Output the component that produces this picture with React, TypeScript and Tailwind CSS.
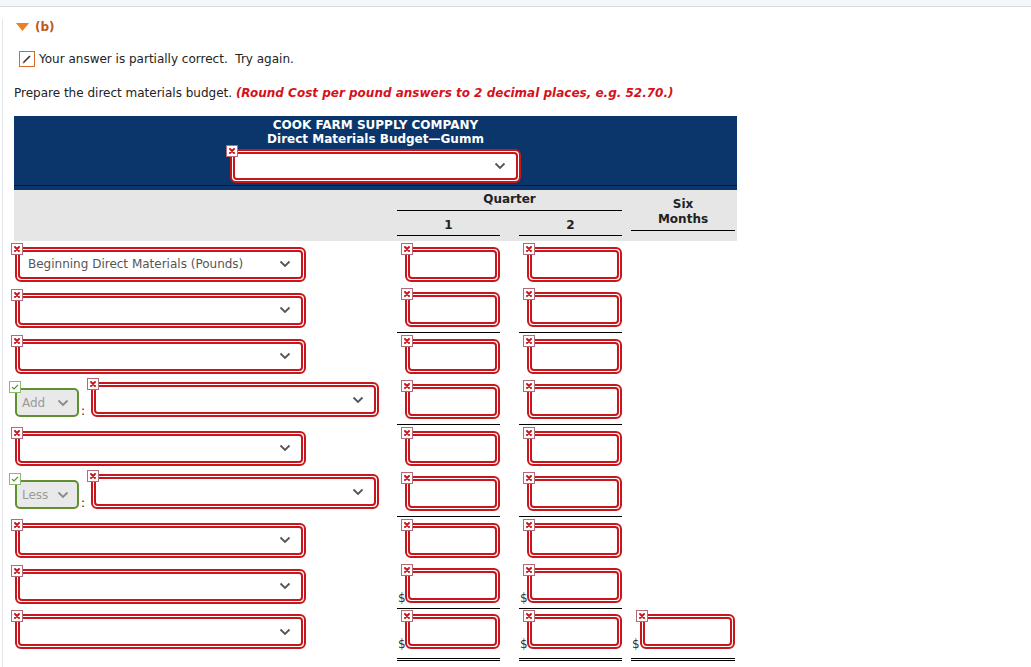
import React from "react";

const RED = "#c8161d";

function XBadge({ className = "" }: { className?: string }) {
  return (
    <svg width="12" height="12" viewBox="0 0 12 12" className={className}>
      <rect x="0.5" y="0.5" width="11" height="11" fill="#fff" stroke="#b66a76" />
      <path d="M4 4 L8 8 M8 4 L4 8" stroke={RED} strokeWidth="2" strokeLinecap="round" />
    </svg>
  );
}

function CheckBadge({ className = "" }: { className?: string }) {
  return (
    <svg width="12" height="12" viewBox="0 0 12 12" className={className}>
      <rect x="0.5" y="0.5" width="11" height="11" fill="#fff" stroke="#8fb870" />
      <path d="M3 6.2 L5 8 L9 3.8" stroke="#4d8a2a" strokeWidth="1.1" fill="none" />
    </svg>
  );
}

function Chevron({ color = "#555" }: { color?: string }) {
  return (
    <svg width="12" height="8" viewBox="0 0 12 8">
      <path d="M1.5 1.5 L6 6 L10.5 1.5" stroke={color} strokeWidth="1.8" fill="none" />
    </svg>
  );
}

function RedBox({ className = "", children }: { className?: string; children?: React.ReactNode }) {
  return (
    <div className={`relative ${className}`}>
      <div className="h-full rounded-[6px] border-2 border-[#c8161d] bg-white p-px">
        <div className="flex h-full items-center rounded-[4px] border-2 border-[#c8161d] pl-[8px] pr-[10px]">
          {children}
        </div>
      </div>
      <XBadge className="absolute -left-[4px] -top-[4px]" />
    </div>
  );
}

function RedSelect({ className = "", label = "" }: { className?: string; label?: string }) {
  return (
    <RedBox className={className}>
      <span className="flex-1 truncate text-[12px] text-[#555]">{label}</span>
      <Chevron />
    </RedBox>
  );
}

function GreenSelect({ label }: { label: string }) {
  return (
    <div className="relative h-[29px] w-[64px]">
      <div className="flex h-full items-center justify-between rounded-[5px] border-2 border-[#5f8f2f] bg-[#e9e9e9] pl-[5px] pr-[8px]">
        <span className="text-[12px] text-[#9a9a9a]">{label}</span>
        <Chevron color="#8a8a8a" />
      </div>
      <CheckBadge className="absolute -left-[6px] -top-[7px]" />
    </div>
  );
}

type Row = {
  label?: string;
  prefix?: string;
  line?: boolean;
  dollar?: boolean;
  six?: boolean;
  last?: boolean;
};

const rows: Row[] = [
  { label: "Beginning Direct Materials (Pounds)" },
  { line: true },
  {},
  { prefix: "Add", line: true },
  {},
  { prefix: "Less", line: true },
  {},
  { dollar: true, line: true },
  { dollar: true, six: true, last: true },
];

function NumCell({ row, width, pad, show = true }: { row: Row; width: string; pad: string; show?: boolean }) {
  const border = row.last
    ? "border-b-[3px] border-double border-black"
    : row.line
    ? "border-b border-black"
    : "";
  return (
    <div className={`${width} h-full ${show ? border : ""} ${row.last ? "pt-[5px]" : "flex items-center"}`}>
      {show && (
        <div className={`relative w-full ${pad}`}>
          {row.dollar && (
            <span className="absolute bottom-[-1px] left-[1px] text-[12px] leading-[12px] text-[#333]">$</span>
          )}
          <RedBox className="h-[35px]" />
        </div>
      )}
    </div>
  );
}

export default function App() {
  return (
    <div className="min-h-[667px] bg-white font-['DejaVu_Sans',Verdana,sans-serif] text-[12px] text-[#222]">
      <div className="h-[7px] border-b border-[#d6dde3] bg-[#f3f7fa]" />
      <div className="ml-[2px] border-l border-[#e1e6ea] pb-[8px]">
        <div className="mt-[12px] flex h-[16px] items-center pl-[13px]">
          <svg width="13" height="8" viewBox="0 0 13 8">
            <path d="M0 0 H13 L6.5 8 Z" fill="#ef7d22" />
          </svg>
          <span className="ml-[6px] text-[12px] font-bold text-[#c0561b]">(b)</span>
        </div>

        <div className="mt-[16px] flex h-[16px] items-center pl-[16px]">
          <svg width="16" height="16" viewBox="0 0 16 16">
            <rect x="0.5" y="0.5" width="15" height="15" fill="#fff" stroke="#d8692c" />
            <path d="M4.5 11.5 L11 5" stroke="#333" strokeWidth="1.6" />
            <path d="M3.8 12.2 L4.8 11.2" stroke="#d8692c" strokeWidth="1.6" />
          </svg>
          <span className="ml-[4px] whitespace-pre text-[12px]">Your answer is partially correct.  Try again.</span>
        </div>

        <div className="mt-[18px] flex h-[16px] items-center pl-[11px] text-[12px]">
          <span>Prepare the direct materials budget.&nbsp;</span>
          <span className="font-bold italic text-[#d5111a]">
            (Round Cost per pound answers to 2 decimal places, e.g. 52.70.)
          </span>
        </div>

        <div className="ml-[11px] mt-[15px] w-[723px]">
          <div className="h-[74px] bg-[#0a366b]">
            <div className="flex h-[70px] flex-col items-center border-b border-[#021a38] pt-[2px]">
              <div className="text-center text-[12px] font-bold leading-[14px] text-white">
                <div>COOK FARM SUPPLY COMPANY</div>
                <div>Direct Materials Budget—Gumm</div>
              </div>
              <RedSelect className="mt-[3px] h-[34px] w-[291px]" />
            </div>
          </div>

          <div className="flex h-[51px] items-end bg-[#e6e6e6] font-bold text-[#222]">
            <div className="w-[383px]" />
            <div className="mb-[5px] w-[225px]">
              <div className="border-b border-black pb-[4px] text-center leading-[14px]">Quarter</div>
              <div className="flex pt-[7px]">
                <div className="w-[103px] border-b border-black pb-[3px] text-center leading-[14px]">1</div>
                <div className="ml-[19px] w-[103px] border-b border-black pb-[3px] text-center leading-[14px]">2</div>
              </div>
            </div>
            <div className="mb-[10px] ml-[9px] w-[104px] border-b border-black pb-[3px] text-center leading-[15px]">
              <div>Six</div>
              <div>Months</div>
            </div>
          </div>

          {rows.map((row, i) => (
            <div key={i} className={`flex ${row.last ? "h-[52px]" : "h-[46px]"}`}>
              <div className={`w-[383px] pl-[1px] ${row.prefix ? "flex items-end pb-[8px]" : row.last ? "pt-[5px]" : "flex items-center"}`}>
                {row.prefix ? (
                  <>
                    <GreenSelect label={row.prefix} />
                    <span className="ml-[2px] leading-[12px]">:</span>
                    <RedSelect className="ml-[6px] h-[35px] w-[288px]" />
                  </>
                ) : (
                  <RedSelect className="h-[35px] w-[291px]" label={row.label} />
                )}
              </div>
              <NumCell row={row} width="w-[103px]" pad="pl-[8px]" />
              <div className="w-[19px]" />
              <NumCell row={row} width="w-[103px]" pad="pl-[8px]" />
              <div className="w-[9px]" />
              <NumCell row={row} width="w-[104px]" pad="pl-[9px]" show={!!row.six} />
            </div>
          ))}
        </div>
      </div>
    </div>
  );
}
